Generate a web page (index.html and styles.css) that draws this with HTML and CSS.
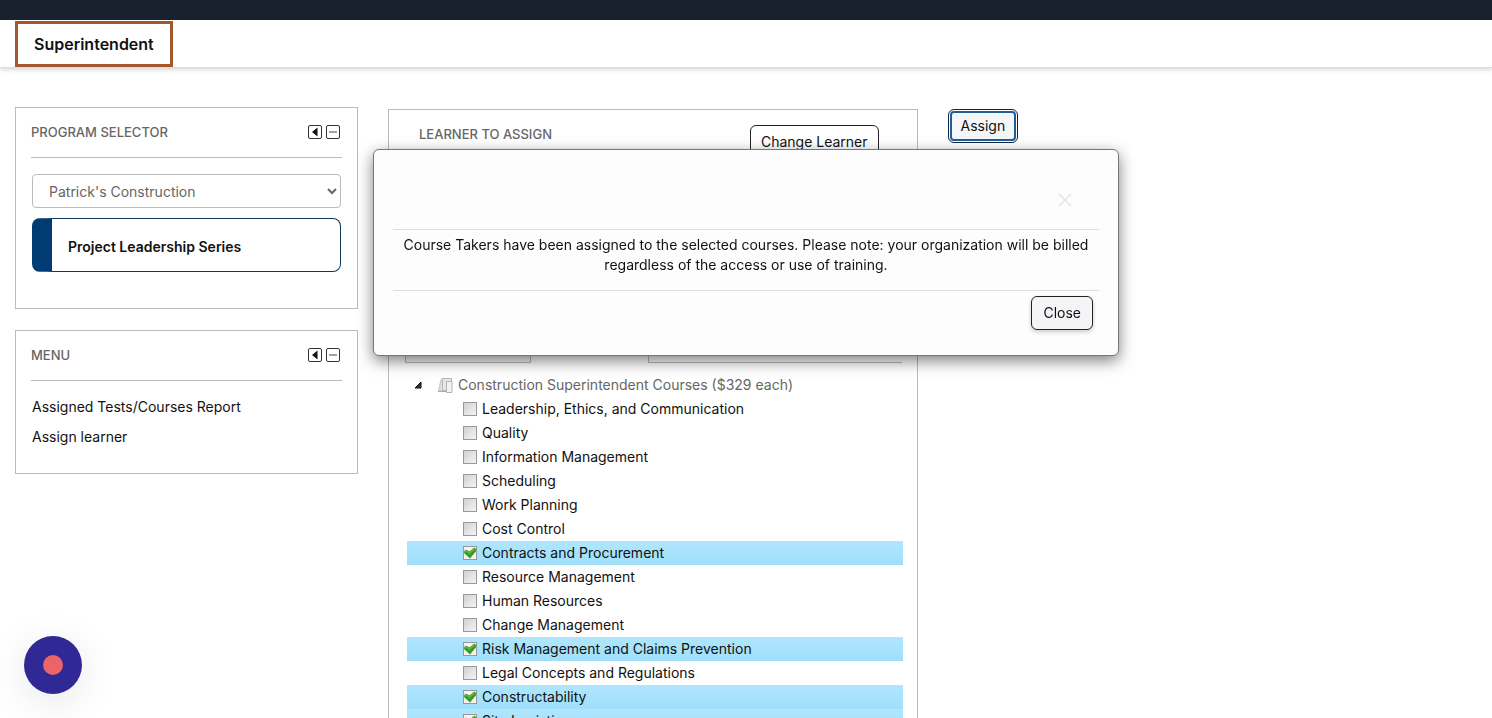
FILE: index.html
```html
<!DOCTYPE html>
<html lang="en">
<head>
    <meta charset="utf-8">
    <title>Superintendent</title>
    <link rel="stylesheet" href="styles.css">
</head>
<body>
    <div class="topbar"></div>
    <header class="header">
        <a class="header-tab" href="#">Superintendent</a>
    </header>

    <main class="columns">
        <div class="side">
            <section class="panel">
                <div class="panel-head">
                    <h2>PROGRAM SELECTOR</h2>
                    <div class="panel-tools">
                        <button type="button" class="tool" aria-label="Dock">
                            <svg width="14" height="14" viewBox="0 0 14 14"><path d="M9.500 2.500v9L4 7z" fill="#111"/></svg>
                        </button>
                        <button type="button" class="tool" aria-label="Collapse">
                            <svg width="14" height="14" viewBox="0 0 14 14"><path d="M3 7h8" stroke="#444"/></svg>
                        </button>
                    </div>
                </div>
                <div class="panel-body">
                    <select class="program" aria-label="Program">
                        <option>Patrick's Construction</option>
                    </select>
                    <a class="series" href="#">Project Leadership Series</a>
                </div>
            </section>

            <section class="panel">
                <div class="panel-head">
                    <h2>MENU</h2>
                    <div class="panel-tools">
                        <button type="button" class="tool" aria-label="Dock">
                            <svg width="14" height="14" viewBox="0 0 14 14"><path d="M9.500 2.500v9L4 7z" fill="#111"/></svg>
                        </button>
                        <button type="button" class="tool" aria-label="Collapse">
                            <svg width="14" height="14" viewBox="0 0 14 14"><path d="M3 7h8" stroke="#444"/></svg>
                        </button>
                    </div>
                </div>
                <nav class="menu">
                    <a href="#">Assigned Tests/Courses Report</a>
                    <a href="#">Assign learner</a>
                </nav>
            </section>
        </div>

        <section class="learner">
            <div class="learner-head">
                <h2>LEARNER TO ASSIGN</h2>
                <button type="button" class="btn">Change Learner</button>
            </div>
            <div class="tabs">
                <div class="tab"></div>
                <div class="tab-active"></div>
                <div class="tab-rest"></div>
            </div>
            <div class="tree">
                <div class="tree-root">
                    <svg class="arrow" width="8" height="8" viewBox="0 0 8 8"><path d="M7 1v6H1z" fill="#333" stroke="#111"/></svg>
                    <svg width="17" height="17" viewBox="0 0 17 17">
                        <path d="M4 2.500L6.500 1v12.500l-5 1z" fill="#dedede" stroke="#c8c8c8"/>
                        <path d="M5.500 1.500h9v12h-9z" fill="#e6e6e6" stroke="#b5b5b5"/>
                        <path d="M9.500 4.500h5.500v11H9.500z" fill="#f2f2f2" stroke="#b5b5b5"/>
                        <path d="M1 14.500h8" stroke="#aaa"/>
                    </svg>
                    <span>Construction Superintendent Courses ($329 each)</span>
                </div>
                <label class="course"><input type="checkbox"> Leadership, Ethics, and Communication</label>
                <label class="course"><input type="checkbox"> Quality</label>
                <label class="course"><input type="checkbox"> Information Management</label>
                <label class="course"><input type="checkbox"> Scheduling</label>
                <label class="course"><input type="checkbox"> Work Planning</label>
                <label class="course"><input type="checkbox"> Cost Control</label>
                <label class="course selected"><input type="checkbox" checked> Contracts and Procurement</label>
                <label class="course"><input type="checkbox"> Resource Management</label>
                <label class="course"><input type="checkbox"> Human Resources</label>
                <label class="course"><input type="checkbox"> Change Management</label>
                <label class="course selected"><input type="checkbox" checked> Risk Management and Claims Prevention</label>
                <label class="course"><input type="checkbox"> Legal Concepts and Regulations</label>
                <label class="course selected"><input type="checkbox" checked> Constructability</label>
                <label class="course selected"><input type="checkbox" checked> Site Logistics</label>
            </div>
        </section>

        <div class="actions">
            <button type="button" class="btn btn-focus">Assign</button>
        </div>
    </main>

    <div class="modal" role="dialog" aria-label="Course assignment">
        <div class="modal-head">
            <button type="button" class="modal-x" aria-label="Dismiss">
                <svg width="14" height="14" viewBox="0 0 14 14"><path d="M1 1l12 12M13 1L1 13" stroke="#e4e4e4" stroke-width="1.500"/></svg>
            </button>
        </div>
        <p class="modal-body">Course Takers have been assigned to the selected courses. Please note: your organization will be billed regardless of the access or use of training.</p>
        <div class="modal-foot">
            <button type="button" class="btn btn-close">Close</button>
        </div>
    </div>

    <button type="button" class="record" aria-label="Record"></button>
</body>
</html>
```
FILE: styles.css
```css
* {
    box-sizing: border-box;
}

body {
    margin: 0;
    height: 100vh;
    overflow: hidden;
    background: #fff;
    color: #111;
    font-family: Inter, "Liberation Sans", sans-serif;
    font-size: 14px;
    line-height: 20px;
}

a {
    color: inherit;
    text-decoration: none;
}

h2 {
    margin: 0;
    font-size: 13px;
    line-height: 18px;
    font-weight: 500;
    color: #666;
}

button, select {
    font: inherit;
    color: inherit;
}

.topbar {
    height: 20px;
    background: #19212f;
}

.header {
    display: flex;
    height: 48px;
    padding-top: 1px;
    padding-left: 15px;
    border-bottom: 1px solid #ddd;
    box-shadow: 0 2px 4px rgba(0, 0, 0, 0.15);
}

.header-tab {
    display: flex;
    align-items: center;
    padding: 0 16px;
    border: 3px solid #a5582c;
    font-size: 16px;
    font-weight: 600;
}

.columns {
    display: flex;
    align-items: flex-start;
    padding-top: 39px;
}

/* left column */
.side {
    width: 25%;
    padding: 0 15px;
}

.panel {
    margin-bottom: 21px;
    padding: 0 15px 36px;
    border: 1px solid #bbb;
}

.panel-head {
    display: flex;
    justify-content: space-between;
    align-items: center;
    height: 50px;
    padding-bottom: 1px;
    border-bottom: 1px solid #bbb;
}

.panel-tools {
    display: flex;
    gap: 4px;
    padding-right: 2px;
}

.tool {
    display: flex;
    align-items: center;
    justify-content: center;
    width: 14px;
    height: 14px;
    padding: 0;
    border: 1px solid #333;
    border-radius: 2px;
    background: #fff;
}

.tool svg {
    flex: none;
}

.panel-body {
    padding: 16px 1px 0;
}

.program {
    display: block;
    width: 100%;
    height: 34px;
    padding: 0 0 0 12px;
    border: 1px solid #bbb;
    border-radius: 4px;
    background: #fff;
    color: #666;
}

.series {
    display: block;
    margin-top: 10px;
    padding: 18px 16px 14px;
    border: 1px solid #0f3a5e;
    border-left: 20px solid #003b71;
    border-radius: 8px;
    font-weight: 600;
}

.menu {
    display: flex;
    flex-direction: column;
    gap: 10px;
    padding: 16px 1px 0;
}

.menu a:last-child {
    margin-bottom: -10px;
}

/* middle column */
.learner {
    width: calc(37.5% - 30px);
    margin: 2px 15px 0;
    padding: 15px 14px 0 16px;
    border: 1px solid #bbb;
}

.learner-head {
    display: flex;
    justify-content: space-between;
    align-items: flex-start;
    padding: 0 24px 0 14px;
}

.btn {
    height: 34px;
    padding: 0 10px;
    border: 1px solid #222;
    border-radius: 6px;
    background: #fff;
}

.btn-focus {
    border: 2px solid #1f5f99;
    background: #f5f6f7;
    outline: 1px solid #10243f;
    outline-offset: 1px;
    box-shadow: 0 0 0 1px #fff;
}

.tabs {
    display: flex;
    height: 40px;
    margin: 164px 1px 0 0;
}

.tab {
    width: 126px;
    border: 1px solid #bbb;
    background: #f5f5f5;
}

.tab-active {
    width: 117px;
    border-top: 1px solid #bbb;
}

.tab-rest {
    flex: 1;
    border-left: 1px solid #bbb;
    border-bottom: 1px solid #bbb;
}

.tree {
    padding: 10px 0 0 2px;
}

.tree-root {
    display: flex;
    align-items: center;
    height: 24px;
    padding-left: 7px;
    color: #666;
}

.arrow {
    margin-right: 15px;
}

.tree-root span {
    margin-left: 4px;
}

.course {
    display: flex;
    align-items: center;
    gap: 5px;
    height: 24px;
    padding-left: 56px;
}

.selected {
    background: linear-gradient(#b0e6fd, #9fdffb);
}

.course input {
    appearance: none;
    width: 14px;
    height: 14px;
    margin: 0;
    border: 1px solid #999;
    background: linear-gradient(135deg, #d0d0d0, #f4f4f4);
}

.course input:checked {
    background: #f4f4f4 url('data:image/svg+xml,<svg xmlns="http://www.w3.org/2000/svg" viewBox="0 0 14 14"><path d="M0 6L3 3.500 6.500 5.500 11.500 1.500 14 4 7 12.500z" fill="%233b9a26"/><path d="M1.500 6L3 4.800 6.500 7.500 11.500 3" fill="none" stroke="%2379cc55"/></svg>') center / 14px 14px no-repeat border-box;
}

/* right column */
.actions {
    padding: 4px 17px;
}

.actions .btn {
    height: 30px;
    padding: 0 9px;
    border-radius: 4px;
}

/* dialog */
.modal {
    position: fixed;
    top: 149px;
    left: 25%;
    width: 50%;
    padding: 0 19px 25px;
    border: 1px solid #777;
    border-radius: 6px;
    background: #fdfdfd;
    box-shadow: 0 5px 15px rgba(0, 0, 0, 0.5);
}

.modal-head {
    display: flex;
    justify-content: flex-end;
    align-items: flex-end;
    height: 80px;
    padding: 0 27px 22px;
    border-bottom: 1px solid #ddd;
}

.modal-x {
    display: flex;
    padding: 0;
    border: 0;
    background: none;
}

.modal-body {
    margin: 0;
    padding: 5px 10px 15px;
    border-bottom: 1px solid #ddd;
    text-align: center;
}

.modal-foot {
    display: flex;
    justify-content: flex-end;
    padding: 5px 6px 0;
}

.btn-close {
    padding: 0 11px;
    background: #f5f5f7;
    box-shadow: 0 2px 4px rgba(0, 0, 0, 0.2);
}

/* floating record button */
.record {
    position: fixed;
    left: 24px;
    bottom: 24px;
    display: flex;
    align-items: center;
    justify-content: center;
    width: 58px;
    height: 58px;
    padding: 0;
    border: 0;
    border-radius: 50%;
    background: #302894;
    box-shadow: 0 8px 40px rgba(0, 0, 0, 0.1);
}

.record::after {
    content: "";
    width: 20px;
    height: 20px;
    border-radius: 50%;
    background: #eb6468;
}
```
